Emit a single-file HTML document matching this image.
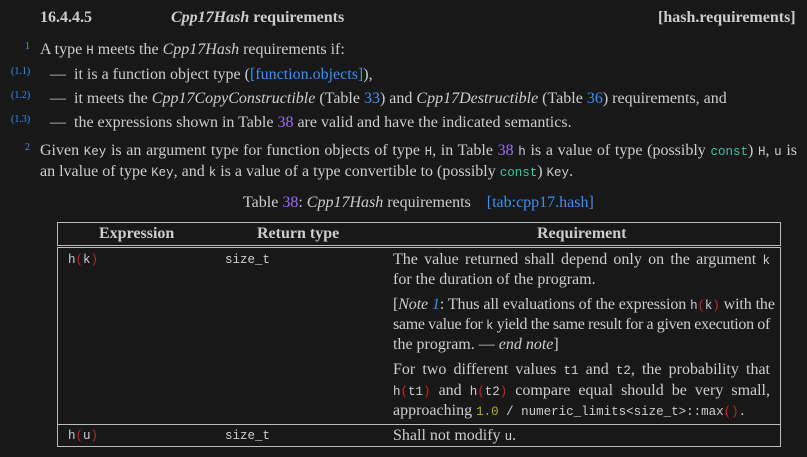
<!DOCTYPE html>
<html><head><meta charset="utf-8"><style>
body{margin:0;width:807px;height:457px;background:#181818;color:#cdcdcd;font-family:"Liberation Serif",serif;font-size:16px;overflow:hidden;position:relative}
.l{position:absolute;white-space:nowrap;line-height:18px}
.j{text-align:justify;text-align-last:justify}
.c{font-family:"Liberation Mono",monospace;font-size:12.5px}
.i{font-style:italic}
.b{font-weight:bold}
.a{color:#3d8ff5}
.p{color:#9c6cf5}
.r{color:#c42525}
.g{color:#2fc8a0}
.y{color:#b8a830}
.n{position:absolute;font-size:10px;color:#3d8ff5}
.box{position:absolute;border:1px solid #bbb;left:57px;width:722px}
</style></head><body>
<div class="l b" style="left:40px;top:9px">16.4.4.5</div>
<div class="l b" style="left:171px;top:9px"><i>Cpp17Hash</i> requirements</div>
<div class="l b" style="left:658px;top:9px">[hash.requirements]</div>

<div class="n" style="left:25px;top:41px">1</div>
<div class="l" style="left:40px;top:41px">A type <span class="c">H</span> meets the <i>Cpp17Hash</i> requirements if:</div>
<div class="n" style="left:11px;top:66px">(1.1)</div>
<div class="l" style="left:50px;top:66px">— &nbsp;it is a function object type (<span class="a">[function.objects]</span>),</div>
<div class="n" style="left:11px;top:90px">(1.2)</div>
<div class="l" style="left:50px;top:90px">— &nbsp;it meets the <i>Cpp17CopyConstructible</i> (Table <span class="a">33</span>) and <i>Cpp17Destructible</i> (Table <span class="a">36</span>) requirements, and</div>
<div class="n" style="left:11px;top:114px">(1.3)</div>
<div class="l" style="left:50px;top:114px">— &nbsp;the expressions shown in Table <span class="p">38</span> are valid and have the indicated semantics.</div>
<div class="n" style="left:25px;top:142px">2</div>
<div class="l j" style="left:40px;top:142px;width:757px">Given <span class="c">Key</span> is an argument type for function objects of type <span class="c">H</span>, in Table <span class="p">38</span> <span class="c">h</span> is a value of type (possibly <span class="c g">const</span>) <span class="c">H</span>, <span class="c">u</span> is</div>
<div class="l" style="left:40px;top:163px">an lvalue of type <span class="c">Key</span>, and <span class="c">k</span> is a value of a type convertible to (possibly <span class="c g">const</span>) <span class="c">Key</span>.</div>
<div class="l" style="left:243px;top:194px">Table <span class="p">38</span>: <i>Cpp17Hash</i> requirements &nbsp;&nbsp;&nbsp;<span class="a">[tab:cpp17.hash]</span></div>

<div class="box" style="top:222px;height:22px"></div>
<div class="box" style="top:247px;height:176px"></div>
<div class="box" style="top:424px;height:21px"></div>
<div class="l b" style="left:99px;top:225px">Expression</div>
<div class="l b" style="left:257px;top:225px">Return type</div>
<div class="l b" style="left:537px;top:225px">Requirement</div>

<div class="l c" style="left:68px;top:251px">h<span class="r">(</span>k<span class="r">)</span></div>
<div class="l c" style="left:225px;top:251px">size_t</div>
<div class="l j" style="left:393px;top:251px;width:377px">The value returned shall depend only on the argument <span class="c">k</span></div>
<div class="l" style="left:393px;top:271px">for the duration of the program.</div>
<div class="l j" style="left:393px;top:296px;width:377px;letter-spacing:-0.1px">[<i>Note <span class="a">1</span></i>: Thus all evaluations of the expression <span class="c">h<span class="r">(</span>k<span class="r">)</span></span> with the</div>
<div class="l j" style="left:393px;top:316px;width:377px;letter-spacing:-0.3px;word-spacing:-1px">same value for <span class="c">k</span> yield the same result for a given execution of</div>
<div class="l" style="left:393px;top:336px">the program. — <i>end note</i>]</div>
<div class="l j" style="left:393px;top:361px;width:377px">For two different values <span class="c">t1</span> and <span class="c">t2</span>, the probability that</div>
<div class="l j" style="left:393px;top:382px;width:377px"><span class="c">h<span class="r">(</span>t1<span class="r">)</span></span> and <span class="c">h<span class="r">(</span>t2<span class="r">)</span></span> compare equal should be very small,</div>
<div class="l" style="left:393px;top:402px">approaching <span class="c"><span class="y">1.0</span> / numeric_limits&lt;size_t&gt;::max<span class="r">()</span>.</span></div>
<div class="l c" style="left:68px;top:427px">h<span class="r">(</span>u<span class="r">)</span></div>
<div class="l c" style="left:225px;top:427px">size_t</div>
<div class="l" style="left:393px;top:427px">Shall not modify <span class="c">u</span>.</div>
</body></html>
